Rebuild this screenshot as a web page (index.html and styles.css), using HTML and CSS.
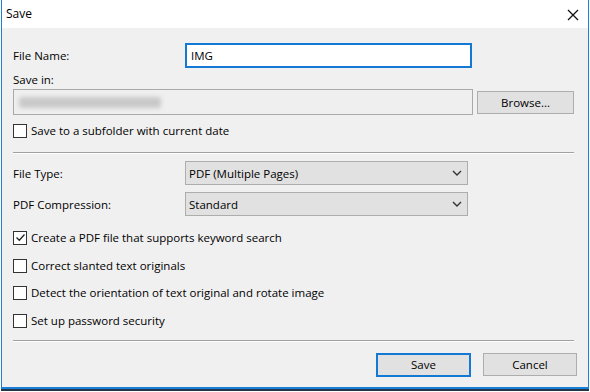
FILE: index.html
```html
<!DOCTYPE html>
<html>
<head>
<meta charset="utf-8">
<link rel="stylesheet" href="styles.css">
</head>
<body>
<div class="window">
  <div class="titlebar">
    <span class="title">Save</span>
    <svg class="close" width="12" height="12" viewBox="0 0 12 12"><path d="M1 1 L11 11 M11 1 L1 11" stroke="#111" stroke-width="1.3" fill="none"/></svg>
  </div>
  <div class="content">
    <div class="row row-name">
      <span class="label">File Name:</span>
      <div class="textbox">IMG</div>
    </div>
    <div class="label savein-label">Save in:</div>
    <div class="row row-savein">
      <div class="pathbox"><div class="blurred"></div></div>
      <div class="btn browse">Browse...</div>
    </div>
    <div class="check first"><span class="box"></span><span>Save to a subfolder with current date</span></div>
    <div class="sep sep1"></div>
    <div class="row row-select">
      <span class="label">File Type:</span>
      <div class="select"><span>PDF (Multiple Pages)</span><svg width="10" height="6" viewBox="0 0 10 6"><path d="M1 1 L5 5 L9 1" stroke="#333" stroke-width="1.4" fill="none"/></svg></div>
    </div>
    <div class="row row-select second">
      <span class="label">PDF Compression:</span>
      <div class="select"><span>Standard</span><svg width="10" height="6" viewBox="0 0 10 6"><path d="M1 1 L5 5 L9 1" stroke="#333" stroke-width="1.4" fill="none"/></svg></div>
    </div>
    <div class="check opt1"><span class="box"><svg width="11" height="11" viewBox="0 0 11 11"><path d="M1.5 5.5 L4.3 8.3 L9.5 2.5" stroke="#222" stroke-width="1.3" fill="none"/></svg></span><span>Create a PDF file that supports keyword search</span></div>
    <div class="check opt"><span class="box"></span><span>Correct slanted text originals</span></div>
    <div class="check opt short"><span class="box"></span><span>Detect the orientation of text original and rotate image</span></div>
    <div class="check opt"><span class="box"></span><span>Set up password security</span></div>
    <div class="sep sep2"></div>
    <div class="buttons">
      <div class="btn default">Save</div>
      <div class="btn">Cancel</div>
    </div>
  </div>
</div>
</body>
</html>
```

FILE: styles.css
```css
html, body {
  margin: 0;
  padding: 0;
  background: #ffffff;
}
body {
  font-family: "Open Sans", "Noto Sans", sans-serif;
  font-size: 11.5px;
  color: #000;
  width: 590px;
  height: 392px;
  overflow: hidden;
}
.window {
  margin-left: 1px;
  width: 586px;
  height: 387px;
  border-left: 1px solid #1a7fd6;
  border-right: 1px solid #1a7fd6;
  border-bottom: 2px solid #1a7fd6;
  box-shadow: 0 2px 0 #23364a;
  background: #f0f0f0;
  display: flex;
  flex-direction: column;
}
.titlebar {
  height: 28px;
  background: #ffffff;
  display: flex;
  align-items: center;
  justify-content: space-between;
  padding: 0 9px 0 4px;
  flex-shrink: 0;
}
.title {
  font-size: 12px;
  margin-top: -1px;
}
.close {
  margin-top: 2px;
}
.content {
  padding: 15px 14px 0 11px;
  display: flex;
  flex-direction: column;
}
.row {
  display: flex;
  align-items: center;
}
.label {
  width: 172px;
  flex-shrink: 0;
  line-height: 15px;
}
.textbox {
  width: 279px;
  height: 21px;
  border: 2px solid #1479d4;
  background: #fff;
  line-height: 21px;
  padding-left: 4px;
  box-sizing: content-box;
}
.row-name {
  height: 25px;
}
.savein-label {
  margin-top: 4px;
}
.row-savein {
  margin-top: 2px;
  justify-content: space-between;
}
.pathbox {
  width: 453px;
  height: 24px;
  border: 1px solid #a9a9a9;
  background: #efefef;
  display: flex;
  align-items: center;
  padding-left: 5px;
  box-sizing: content-box;
}
.blurred {
  width: 142px;
  height: 11px;
  background: #c9c9c9;
  filter: blur(2px);
  border-radius: 3px;
}
.btn {
  background: #e1e1e1;
  border: 1px solid #adadad;
  height: 21px;
  line-height: 21px;
  text-align: center;
  width: 92px;
}
.browse {
  width: 95px;
  margin-right: 0;
}
.check {
  display: flex;
  align-items: center;
  height: 15px;
  line-height: 15px;
}
.check .box {
  width: 12px;
  height: 12px;
  border: 1px solid #333;
  background: #fff;
  margin-right: 4px;
  display: flex;
  align-items: center;
  justify-content: center;
  flex-shrink: 0;
}
.check.first {
  margin-top: 8px;
}
.sep {
  height: 1px;
  background: #a0a0a0;
  border-bottom: 1px solid #ffffff;
}
.sep1 {
  margin-top: 14px;
}
.row-select {
  margin-top: 7px;
}
.row-select.second {
  margin-top: 7px;
}
.select {
  height: 22px;
  border: 1px solid #adadad;
  background: #e1e1e1;
  display: flex;
  align-items: center;
  justify-content: space-between;
  padding: 0 5px 0 3px;
  box-sizing: content-box;
  width: 273px;
}
.check.opt1 {
  margin-top: 14px;
}
.check.opt {
  margin-top: 13px;
}
.check.opt.short {
  margin-top: 12px;
}
.sep2 {
  margin-top: 12px;
}
.buttons {
  display: flex;
  justify-content: flex-end;
  gap: 12px;
  margin-top: 11px;
  margin-right: -3px;
}
.btn.default {
  border: 2px solid #1479d4;
  height: 20px;
  line-height: 20px;
  width: 91px;
}
```
